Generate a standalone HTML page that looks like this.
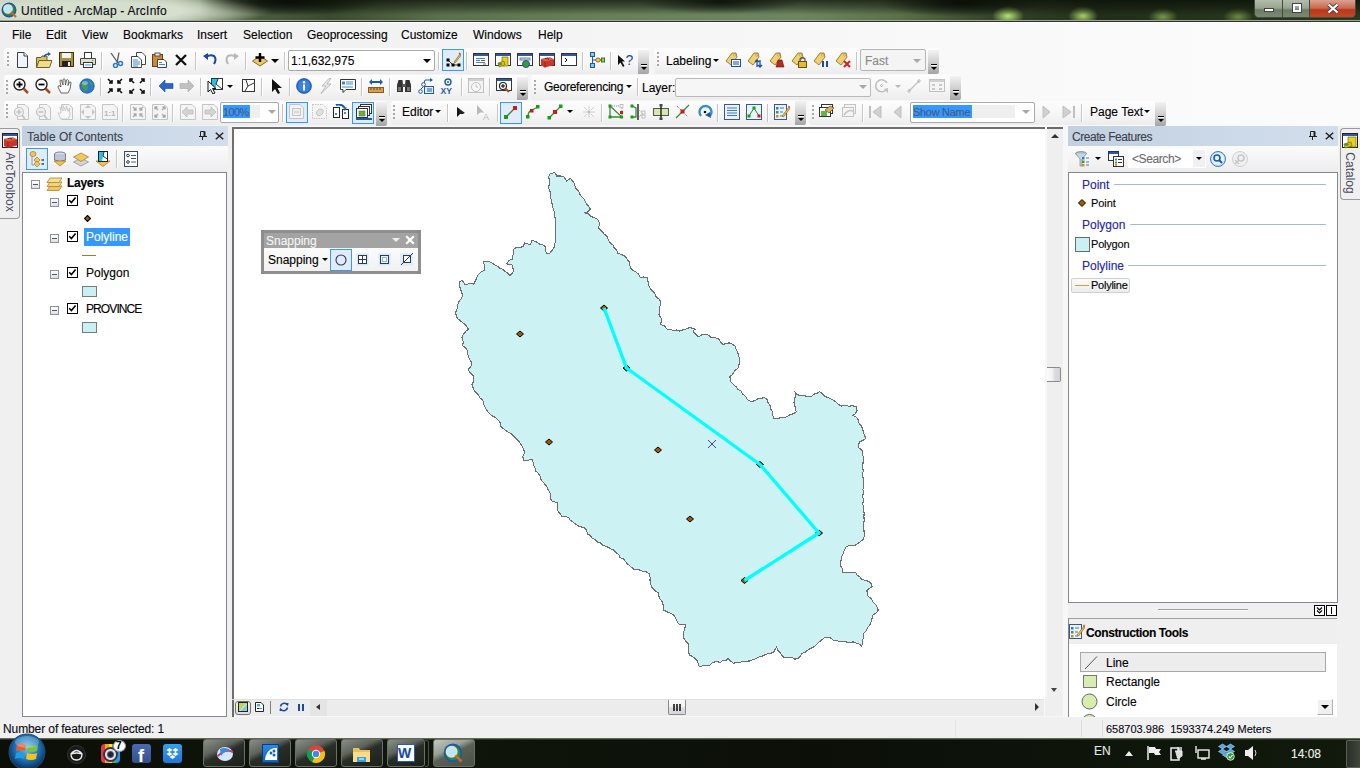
<!DOCTYPE html>
<html><head><meta charset="utf-8">
<style>
*{box-sizing:border-box;margin:0;padding:0}
html,body{width:1360px;height:768px;overflow:hidden;background:#f0f0f0;font-family:"Liberation Sans",sans-serif;font-size:12px;color:#000}
.a{position:absolute}
.t{position:absolute;white-space:nowrap;line-height:14px;height:14px;-webkit-text-stroke:0.12px currentColor}
.tb{position:absolute;background:linear-gradient(#fdfdfd,#f6f6f6 55%,#ececec);border-radius:3px}
.grip{position:absolute;width:2px;height:14px;background:repeating-linear-gradient(#a8a8a8 0 2px,transparent 2px 4px)}
.sep{position:absolute;width:1px;height:18px;background:#c5c5c5;border-right:1px solid #fff;width:2px}
.end{position:absolute;width:11px;background:linear-gradient(180deg,#f2f2f2,#d4d4d4 45%,#a4a4a4);border-radius:0 0 2px 0}
.end:after{content:"";position:absolute;left:3px;bottom:4px;width:0;height:0;border-left:3.5px solid transparent;border-right:3.5px solid transparent;border-top:3.5px solid #000}
.end:before{content:"";position:absolute;left:3px;bottom:9px;width:6px;height:1px;background:#000;box-shadow:0 1px 0 #fff}
.combo{position:absolute;background:#fff;border:1px solid #a9a9a9;border-radius:2px}
.dd{position:absolute;width:0;height:0;border-left:4px solid transparent;border-right:4px solid transparent;border-top:4px solid #000}
.hot{position:absolute;background:#e1ecf9;border:1px solid #3399ff}
.ico{position:absolute}
</style></head><body>
<div class="a" style="left:0;top:0;width:1360px;height:21px;background:
radial-gradient(ellipse 16px 10px at 1008px 16px,rgba(190,235,120,.95),rgba(190,235,120,0)),
radial-gradient(ellipse 15px 10px at 1083px 16px,rgba(190,235,120,.85),rgba(190,235,120,0)),
radial-gradient(ellipse 15px 9px at 1163px 17px,rgba(170,220,110,.6),rgba(170,220,110,0)),
radial-gradient(ellipse 15px 9px at 1238px 17px,rgba(170,220,110,.5),rgba(170,220,110,0)),
radial-gradient(ellipse 180px 17px at 92px 11px,rgba(214,222,206,1) 50%,rgba(200,210,190,0)),
radial-gradient(ellipse 90px 14px at 290px 2px,rgba(8,12,6,.9),rgba(8,12,6,0)),radial-gradient(ellipse 80px 12px at 720px 2px,rgba(8,12,6,.8),rgba(8,12,6,0)),radial-gradient(ellipse 80px 14px at 960px 3px,rgba(8,12,6,.9),rgba(8,12,6,0)),linear-gradient(90deg,#c8d0c0 0,#b8c2ae 170px,#7a8a6a 210px,#4a5c3e 260px,#3a4a2e 330px,#5a704c 440px,#68805a 600px,#6e8660 800px,#5a7048 900px,#34442a 990px,#222e1a 1100px,#2a3a20 1360px)"></div>
<div class="a" style="left:200px;top:0;width:1160px;height:21px;background:linear-gradient(180deg,rgba(8,12,6,.7) 0,rgba(8,12,6,.4) 35%,rgba(8,12,6,0) 70%);-webkit-mask-image:linear-gradient(90deg,transparent 0,#000 60px)"></div>
<div class="a" style="left:0;top:20px;width:1360px;height:1px;background:#9aa890"></div>
<div class="a" style="left:0;top:21px;width:1360px;height:1px;background:#2c3328"></div>
<div class="a" style="left:0;top:22px;width:1360px;height:1px;background:#fff"></div>
<svg class="a" style="left:1px;top:2px" width="17" height="17" viewBox="0 0 17 17">
<circle cx="8" cy="8" r="7.5" fill="#1d5aa0"/><circle cx="8" cy="8" r="6" fill="#2e8a3c"/><circle cx="7" cy="7" r="4.2" fill="#bfe6f5" stroke="#e0e0e0" stroke-width="1.3"/><line x1="10" y1="10" x2="15" y2="15" stroke="#c86a28" stroke-width="2.2"/></svg>
<div class="t" style="left:21px;top:4px;font-size:12px;color:#0b0b14;letter-spacing:0.22px">Untitled - ArcMap - ArcInfo</div>
<div class="a" style="left:1254px;top:0;width:102px;height:18px;border:1px solid #3e4a3a;border-top:none;border-radius:0 0 5px 5px;overflow:hidden;background:#6f7d68">
<div class="a" style="left:0;top:0;width:27px;height:18px;background:linear-gradient(#b4bcac,#98a490 45%,#6e7c66 55%,#7d8a74)"></div>
<div class="a" style="left:27px;top:0;width:1px;height:18px;background:#3e4a3a"></div>
<div class="a" style="left:28px;top:0;width:26px;height:18px;background:linear-gradient(#b4bcac,#98a490 45%,#6e7c66 55%,#7d8a74)"></div>
<div class="a" style="left:54px;top:0;width:1px;height:18px;background:#3e4a3a"></div>
<div class="a" style="left:55px;top:0;width:47px;height:18px;background:linear-gradient(#dca090,#c86a50 45%,#b83818 55%,#c84a28)"></div>
<div class="a" style="left:9px;top:8px;width:10px;height:4px;background:#fff;border:1px solid #444"></div>
<div class="a" style="left:38px;top:4px;width:8px;height:8px;border:2px solid #fff;box-shadow:0 0 0 1px #444"></div>
<svg class="a" style="left:72px;top:3px" width="12" height="11"><path d="M1.5 1.5 L10.5 9.5 M10.5 1.5 L1.5 9.5" stroke="#444" stroke-width="4"/><path d="M1.5 1.5 L10.5 9.5 M10.5 1.5 L1.5 9.5" stroke="#fff" stroke-width="2.2"/></svg>
</div>
<div class="a" style="left:0;top:23px;width:1360px;height:103px;background:linear-gradient(90deg,#efefef,#f4f4f4 40%,#f9f9f9 70%,#fbfbfb)"></div>
<div class="t" style="left:12px;top:28px;color:#000">File</div>
<div class="t" style="left:46px;top:28px;color:#000">Edit</div>
<div class="t" style="left:82px;top:28px;color:#000">View</div>
<div class="t" style="left:123px;top:28px;color:#000">Bookmarks</div>
<div class="t" style="left:197px;top:28px;color:#000">Insert</div>
<div class="t" style="left:243px;top:28px;color:#000">Selection</div>
<div class="t" style="left:307px;top:28px;color:#000">Geoprocessing</div>
<div class="t" style="left:401px;top:28px;color:#000">Customize</div>
<div class="t" style="left:473px;top:28px;color:#000">Windows</div>
<div class="t" style="left:538px;top:28px;color:#000">Help</div>
<div class="tb" style="left:4px;top:48px;width:645px;height:26px"></div>
<div class="grip" style="left:7px;top:52px"></div>
<div class="sep" style="left:101px;top:52px;height:18px"></div>
<div class="sep" style="left:195px;top:52px;height:18px"></div>
<div class="sep" style="left:245px;top:52px;height:18px"></div>
<div class="sep" style="left:284px;top:52px;height:18px"></div>
<div class="sep" style="left:438px;top:52px;height:18px"></div>
<div class="sep" style="left:466px;top:52px;height:18px"></div>
<div class="sep" style="left:582px;top:52px;height:18px"></div>
<div class="sep" style="left:610px;top:52px;height:18px"></div>
<div class="end" style="left:638px;top:50px;height:24px"></div>
<div class="combo" style="left:288px;top:50px;width:147px;height:21px"></div>
<div class="t" style="left:291px;top:54px;">1:1,632,975</div>
<div class="dd" style="left:423px;top:59px;border-left-width:4px;border-right-width:4px;border-top:4px solid #000"></div>
<div class="dd" style="left:271px;top:59px;border-left-width:4px;border-right-width:4px;border-top:4px solid #000"></div>
<div class="hot" style="left:442px;top:49px;width:22px;height:22px"></div>
<div class="tb" style="left:654px;top:48px;width:284px;height:26px"></div>
<div class="grip" style="left:657px;top:52px"></div>
<div class="t" style="left:666px;top:54px;">Labeling</div>
<div class="dd" style="left:713px;top:59px;border-left-width:3px;border-right-width:3px;border-top:3px solid #000"></div>
<div class="sep" style="left:856px;top:52px;height:18px"></div>
<div class="combo" style="left:860px;top:49px;width:66px;height:22px;background:#f4f4f4;border-color:#b5b5b5"></div>
<div class="t" style="left:865px;top:54px;color:#8a8a8a">Fast</div>
<div class="dd" style="left:913px;top:59px;border-left-width:4px;border-right-width:4px;border-top:4px solid #a8a8a8"></div>
<div class="end" style="left:928px;top:50px;height:24px"></div>
<div class="tb" style="left:4px;top:75px;width:524px;height:25px"></div>
<div class="grip" style="left:6px;top:80px"></div>
<div class="sep" style="left:100px;top:78px;height:18px"></div>
<div class="sep" style="left:150px;top:78px;height:18px"></div>
<div class="sep" style="left:200px;top:78px;height:18px"></div>
<div class="sep" style="left:261px;top:78px;height:18px"></div>
<div class="sep" style="left:289px;top:78px;height:18px"></div>
<div class="sep" style="left:361px;top:78px;height:18px"></div>
<div class="sep" style="left:389px;top:78px;height:18px"></div>
<div class="sep" style="left:461px;top:78px;height:18px"></div>
<div class="sep" style="left:489px;top:78px;height:18px"></div>
<div class="end" style="left:517px;top:77px;height:23px"></div>
<div class="dd" style="left:227px;top:85px;border-left-width:3px;border-right-width:3px;border-top:3px solid #000"></div>
<div class="tb" style="left:531px;top:75px;width:430px;height:25px"></div>
<div class="grip" style="left:534px;top:80px"></div>
<div class="t" style="left:544px;top:80px;letter-spacing:-0.25px">Georeferencing</div>
<div class="dd" style="left:626px;top:85px;border-left-width:3px;border-right-width:3px;border-top:3px solid #000"></div>
<div class="sep" style="left:637px;top:78px;height:18px"></div>
<div class="t" style="left:642px;top:81px;">Layer:</div>
<div class="combo" style="left:675px;top:78px;width:196px;height:19px;background:#f6f6f6;border-color:#b9b9b9"></div>
<div class="dd" style="left:859px;top:85px;border-left-width:4px;border-right-width:4px;border-top:4px solid #a8a8a8"></div>
<div class="dd" style="left:895px;top:85px;border-left-width:3px;border-right-width:3px;border-top:3px solid #b8b8b8"></div>
<div class="end" style="left:950px;top:76px;height:24px"></div>
<div class="tb" style="left:4px;top:101px;width:383px;height:24px"></div>
<div class="grip" style="left:6px;top:104px"></div>
<div class="sep" style="left:122px;top:104px;height:18px"></div>
<div class="sep" style="left:172px;top:104px;height:18px"></div>
<div class="sep" style="left:282px;top:104px;height:18px"></div>
<div class="combo" style="left:220px;top:102px;width:59px;height:21px"></div>
<div class="a" style="left:223px;top:105px;width:27px;height:13px;background:#3399ff"></div>
<div class="a" style="left:250px;top:105px;width:10px;height:13px;background:#efefef"></div>
<div class="t" style="left:223px;top:105px;color:#4a5a78;font-size:11px;letter-spacing:-0.6px">100%</div>
<div class="dd" style="left:268px;top:110px;border-left-width:4px;border-right-width:4px;border-top:4px solid #a8a8a8"></div>
<div class="hot" style="left:286px;top:102px;width:22px;height:21px"></div>
<div class="hot" style="left:352px;top:102px;width:22px;height:22px"></div>
<div class="end" style="left:376px;top:102px;height:24px"></div>
<div class="tb" style="left:391px;top:101px;width:415px;height:24px"></div>
<div class="grip" style="left:393px;top:105px"></div>
<div class="t" style="left:402px;top:105px;">Editor</div>
<div class="dd" style="left:435px;top:110px;border-left-width:3px;border-right-width:3px;border-top:3px solid #000"></div>
<div class="sep" style="left:447px;top:104px;height:18px"></div>
<div class="sep" style="left:497px;top:104px;height:18px"></div>
<div class="sep" style="left:601px;top:104px;height:18px"></div>
<div class="sep" style="left:717px;top:104px;height:18px"></div>
<div class="sep" style="left:767px;top:104px;height:18px"></div>
<div class="hot" style="left:500px;top:102px;width:22px;height:22px"></div>
<div class="dd" style="left:567px;top:110px;border-left-width:3px;border-right-width:3px;border-top:3px solid #000"></div>
<div class="end" style="left:795px;top:101px;height:24px"></div>
<div class="tb" style="left:809px;top:101px;width:357px;height:24px"></div>
<div class="grip" style="left:812px;top:105px"></div>
<div class="sep" style="left:862px;top:104px;height:18px"></div>
<div class="sep" style="left:1081px;top:104px;height:18px"></div>
<div class="combo" style="left:910px;top:102px;width:125px;height:21px"></div>
<div class="a" style="left:913px;top:105px;width:59px;height:13px;background:#3399ff"></div>
<div class="a" style="left:972px;top:105px;width:43px;height:13px;background:#efefef"></div>
<div class="t" style="left:913px;top:105px;color:#4a5a78;font-size:11px;letter-spacing:-0.3px">Show Name</div>
<div class="dd" style="left:1022px;top:110px;border-left-width:4px;border-right-width:4px;border-top:4px solid #a8a8a8"></div>
<div class="t" style="left:1090px;top:105px;">Page Text</div>
<div class="dd" style="left:1144px;top:110px;border-left-width:3px;border-right-width:3px;border-top:3px solid #000"></div>
<div class="end" style="left:1155px;top:102px;height:24px"></div>
<svg class="ico" style="left:14px;top:52px" width="16" height="16" viewBox="0 0 16 16"><path d="M3.5 0.5 H10 L13.5 4 V15.5 H3.5Z" fill="#eef5fc" stroke="#3c3c3c"/><path d="M10 0.5 V4 H13.5" fill="#fff" stroke="#3c3c3c"/></svg>
<svg class="ico" style="left:36px;top:52px" width="16" height="16" viewBox="0 0 16 16"><path d="M0.5 5.5 H5 L6 4 H11 V15.5 H0.5Z" fill="#d8c070" stroke="#6e5e20"/><path d="M0.5 15.5 L3 8.5 H16 L13.5 15.5Z" fill="#f0dc8a" stroke="#6e5e20"/><path d="M8 5 Q9 2 13 2" stroke="#1a5aa8" stroke-width="1.6" fill="none"/><path d="M12 0 L15 2 L12 4Z" fill="#1a5aa8"/></svg>
<svg class="ico" style="left:59px;top:52px" width="16" height="16" viewBox="0 0 16 16"><rect x="0.5" y="0.5" width="14" height="14" fill="#a89040" stroke="#3c3410"/><rect x="3" y="1" width="9" height="5" fill="#f4f4f4"/><rect x="3" y="9" width="9" height="5.5" fill="#222"/><rect x="9" y="10" width="2" height="4" fill="#eee"/></svg>
<svg class="ico" style="left:80px;top:52px" width="16" height="16" viewBox="0 0 16 16"><rect x="4.5" y="0.5" width="7" height="6" fill="#fff" stroke="#333"/><path d="M0.5 6.5 H15.5 V12.5 H0.5Z" fill="#e0e0c8" stroke="#444"/><rect x="3.5" y="10.5" width="9" height="5" fill="#fff" stroke="#333"/><path d="M5 13 H11" stroke="#3a8ad8"/><rect x="12" y="8" width="1.5" height="1" fill="#3c3"/></svg>
<svg class="ico" style="left:108px;top:52px" width="16" height="16" viewBox="0 0 16 16"><path d="M3 1 L10 11 M11 0.5 L9 11" stroke="#555" stroke-width="1.3" fill="none"/><circle cx="7.5" cy="13.5" r="2" fill="none" stroke="#2a7ac8" stroke-width="1.5"/><circle cx="12.5" cy="11.5" r="2" fill="none" stroke="#2a7ac8" stroke-width="1.5"/></svg>
<svg class="ico" style="left:131px;top:52px" width="16" height="16" viewBox="0 0 16 16"><path d="M5.5 0.5 H11 L14.5 4 V12.5 H5.5Z" fill="#fff" stroke="#444"/><path d="M0.5 4.5 H7 L10.5 8 V15.5 H0.5Z" fill="#fff" stroke="#444"/><path d="M2 8 H7 M2 10 H9 M2 12 H9 M2 14 H7" stroke="#3a8ad8"/></svg>
<svg class="ico" style="left:152px;top:52px" width="16" height="16" viewBox="0 0 16 16"><rect x="0.5" y="2.5" width="10" height="12" fill="#d08a30" stroke="#6a4010"/><rect x="3" y="1" width="5" height="3" fill="#eee" stroke="#555"/><path d="M5.5 7.5 H12 L14.5 10 V15.5 H5.5Z" fill="#fff" stroke="#444"/><path d="M7 10.5 H10 M7 12.5 H13" stroke="#3a8ad8"/></svg>
<svg class="ico" style="left:174px;top:52px" width="16" height="16" viewBox="0 0 16 16"><path d="M2 3 L12 13 M12 3 L2 13" stroke="#111" stroke-width="2.3"/></svg>
<svg class="ico" style="left:202px;top:52px" width="16" height="16" viewBox="0 0 16 16"><path d="M4 5 Q8 2 12 4 Q15 7 12 12" stroke="#1a4a98" stroke-width="2" fill="none"/><path d="M1 4 L6 1 L6 8Z" fill="#1a4a98"/></svg>
<svg class="ico" style="left:224px;top:52px" width="16" height="16" viewBox="0 0 16 16"><path d="M12 5 Q8 2 4 4 Q1 7 4 12" stroke="#b8b8b8" stroke-width="2" fill="none"/><path d="M15 4 L10 1 L10 8Z" fill="#b8b8b8"/></svg>
<svg class="ico" style="left:252px;top:52px" width="16" height="16" viewBox="0 0 16 16"><path d="M8 4 L15.5 9 L8 14 L0.5 9Z" fill="#f0c860" stroke="#8a6a20"/><path d="M8 1 V10 M3.5 5.5 H12.5" stroke="#000" stroke-width="2.4"/></svg>
<svg class="ico" style="left:445px;top:52px" width="16" height="16" viewBox="0 0 16 16"><path d="M3 8 L8 13 H14" stroke="#333" fill="none"/><rect x="1.5" y="6.5" width="3" height="3" fill="#000"/><rect x="1.5" y="11.5" width="3" height="3" fill="#000"/><rect x="6.5" y="11.5" width="3" height="3" fill="#000"/><rect x="12.5" y="11.5" width="3" height="3" fill="#000"/><path d="M9 10 L15 2 L16 3.5 L10 11Z" fill="#f0b830" stroke="#8a5a10" stroke-width=".6"/><path d="M14 1 L16 3" stroke="#e05050" stroke-width="1.6"/></svg>
<svg class="ico" style="left:473px;top:52px" width="16" height="16" viewBox="0 0 16 16"><rect x="0.5" y="1.5" width="15" height="12" fill="#fff" stroke="#333"/><rect x="1" y="2" width="14" height="2" fill="#2a5ab0"/><path d="M3 6.5 H12 M3 8.5 H7 M3 10.5 H12" stroke="#3a8ad8"/><path d="M8 8.5 H12" stroke="#d03030"/><path d="M10 12 H13" stroke="#3a3"/></svg>
<svg class="ico" style="left:495px;top:52px" width="16" height="16" viewBox="0 0 16 16"><rect x="0.5" y="1.5" width="15" height="12" fill="#fff" stroke="#333"/><rect x="1" y="2" width="14" height="2" fill="#2a5ab0"/><path d="M7 5 L13 5 L13 14 L7 14Z" fill="#e8d020" stroke="#7a6a10" stroke-width=".7"/><path d="M3 11 L9 9 L10 13 L4 15Z" fill="#d8c010" stroke="#7a6a10" stroke-width=".7"/><ellipse cx="5" cy="12" rx="2" ry="1.2" fill="#3a9a3a"/></svg>
<svg class="ico" style="left:517px;top:52px" width="16" height="16" viewBox="0 0 16 16"><rect x="0.5" y="1.5" width="15" height="12" fill="#fff" stroke="#333"/><rect x="1" y="2" width="14" height="2" fill="#2a5ab0"/><rect x="3" y="6" width="10" height="2" fill="#c8d8e8" stroke="#789"/><circle cx="9" cy="12" r="3.5" fill="#3a9a3a" stroke="#1a5aa8"/></svg>
<svg class="ico" style="left:539px;top:52px" width="16" height="16" viewBox="0 0 16 16"><rect x="0.5" y="1.5" width="15" height="12" fill="#fff" stroke="#333"/><rect x="1" y="2" width="14" height="2" fill="#2a5ab0"/><path d="M2 7 L11 5.5 L15 7.5 L15 13 L6 15.5 L2 13.5Z" fill="#c8382a"/><path d="M2 7 L11 5.5 L15 7.5 L6 9.5Z" fill="#e05848"/><path d="M6 9.5 V15.5" stroke="#8a1a10" stroke-width=".7"/><path d="M6 6.5 L9 6 L9.5 7.5" stroke="#333" fill="none" stroke-width=".9"/></svg>
<svg class="ico" style="left:561px;top:52px" width="16" height="16" viewBox="0 0 16 16"><rect x="0.5" y="1.5" width="15" height="12" fill="#fff" stroke="#333"/><rect x="1" y="2" width="14" height="2" fill="#2a5ab0"/><path d="M4 6 L6 8 L4 10" stroke="#000" fill="none"/></svg>
<svg class="ico" style="left:589px;top:52px" width="16" height="16" viewBox="0 0 16 16"><rect x="1.5" y="0.5" width="4" height="4" fill="#8ac8f0" stroke="#1a5aa8"/><rect x="1.5" y="11.5" width="4" height="4" fill="#8ac8f0" stroke="#1a5aa8"/><path d="M3.5 4.5 V11.5 M3.5 8 H13" stroke="#1a5aa8"/><ellipse cx="9" cy="8" rx="2.3" ry="2" fill="#f0d060" stroke="#8a6a10"/><rect x="12.5" y="6" width="3" height="4" fill="#8ad060" stroke="#3a7a20"/></svg>
<svg class="ico" style="left:617px;top:52px" width="16" height="16" viewBox="0 0 16 16"><path d="M1 3 L1 13 L3.5 10.5 L6 15 L7.5 14 L5 9.5 L8 9.5Z" fill="#111"/><text x="8.5" y="13" font-family="Liberation Sans" font-size="14" fill="#1a4aa8">?</text></svg>
<svg class="ico" style="left:725px;top:52px" width="16" height="16" viewBox="0 0 16 16"><path d="M1 9 L7 1 L11 1 L12 5 L6 13Z" fill="#f0d070" stroke="#8a6a10" stroke-width=".8"/><circle cx="9.5" cy="3" r="1" fill="#fff" stroke="#8a6a10" stroke-width=".5"/><rect x="6.5" y="7.5" width="9" height="7" fill="#fff" stroke="#1a4aa8"/><path d="M8 10 H14 M8 12 H14" stroke="#1a4aa8"/></svg>
<svg class="ico" style="left:747px;top:52px" width="16" height="16" viewBox="0 0 16 16"><path d="M1 9 L7 1 L11 1 L12 5 L6 13Z" fill="#f0d070" stroke="#8a6a10" stroke-width=".8"/><circle cx="9.5" cy="3" r="1" fill="#fff" stroke="#8a6a10" stroke-width=".5"/><path d="M10 15 V8 M8 10 L10 8 L12 10 M13 8 V15 M11 13 L13 15 L15 13" stroke="#1a4aa8" stroke-width="1.3" fill="none"/></svg>
<svg class="ico" style="left:769px;top:52px" width="16" height="16" viewBox="0 0 16 16"><path d="M1 9 L7 1 L11 1 L12 5 L6 13Z" fill="#f0d070" stroke="#8a6a10" stroke-width=".8"/><circle cx="9.5" cy="3" r="1" fill="#fff" stroke="#8a6a10" stroke-width=".5"/><path d="M7 15 L9 8 H13 L15 15Z" fill="#b82a20" stroke="#5a1010" stroke-width=".6"/></svg>
<svg class="ico" style="left:791px;top:52px" width="16" height="16" viewBox="0 0 16 16"><path d="M1 9 L7 1 L11 1 L12 5 L6 13Z" fill="#f0d070" stroke="#8a6a10" stroke-width=".8"/><circle cx="9.5" cy="3" r="1" fill="#fff" stroke="#8a6a10" stroke-width=".5"/><rect x="7.5" y="9.5" width="8" height="6" fill="#e8b830" stroke="#6a5010"/><path d="M9 9.5 V7 Q11.5 4.5 14 7 V9.5" stroke="#555" fill="none" stroke-width="1.2"/></svg>
<svg class="ico" style="left:813px;top:52px" width="16" height="16" viewBox="0 0 16 16"><path d="M1 9 L7 1 L11 1 L12 5 L6 13Z" fill="#f0d070" stroke="#8a6a10" stroke-width=".8"/><circle cx="9.5" cy="3" r="1" fill="#fff" stroke="#8a6a10" stroke-width=".5"/><rect x="9" y="9" width="2" height="6" fill="#1a4aa8"/><rect x="13" y="9" width="2" height="6" fill="#1a4aa8"/></svg>
<svg class="ico" style="left:835px;top:52px" width="16" height="16" viewBox="0 0 16 16"><path d="M1 9 L7 1 L11 1 L12 5 L6 13Z" fill="#f0d070" stroke="#8a6a10" stroke-width=".8"/><circle cx="9.5" cy="3" r="1" fill="#fff" stroke="#8a6a10" stroke-width=".5"/><path d="M9 9 L15 15 M15 9 L9 15" stroke="#d82020" stroke-width="2"/></svg>
<svg class="ico" style="left:13px;top:78px" width="16" height="16" viewBox="0 0 16 16"><circle cx="6.5" cy="6.5" r="5.5" fill="#fff" stroke="#222" stroke-width="1.4"/><path d="M3.5 6.5 H9.5 M6.5 3.5 V9.5" stroke="#000" stroke-width="1.8"/><path d="M10.5 10.5 L15 15" stroke="#a05020" stroke-width="2.5"/></svg>
<svg class="ico" style="left:35px;top:78px" width="16" height="16" viewBox="0 0 16 16"><circle cx="6.5" cy="6.5" r="5.5" fill="#fff" stroke="#222" stroke-width="1.4"/><path d="M3.5 6.5 H9.5" stroke="#000" stroke-width="1.8"/><path d="M10.5 10.5 L15 15" stroke="#a05020" stroke-width="2.5"/></svg>
<svg class="ico" style="left:57px;top:78px" width="16" height="16" viewBox="0 0 16 16"><path d="M4 15 L1 9 Q1 7 3 8 L4 9 L3 3 Q3 1.5 4.5 2 L6 7 L6 1.5 Q7 0 8 1.5 L8.5 7 L9.5 2 Q10.5 1 11.5 2.5 L11 7.5 L12.5 4 Q14 3.5 14 5 L13 11 L11 15Z" fill="#fff" stroke="#555" stroke-width=".9"/></svg>
<svg class="ico" style="left:79px;top:78px" width="16" height="16" viewBox="0 0 16 16"><circle cx="8" cy="8" r="7.3" fill="#2a7ad0" stroke="#1a4a80" stroke-width=".6"/><path d="M3 5 Q6 3 8 5 Q7 8 9 9 Q8 13 6 13 Q4 10 3 9Z M10 3 Q13 4 14 7 Q12 8 11 6Z" fill="#4aa040"/><ellipse cx="6" cy="5" rx="3" ry="2" fill="#fff" opacity=".35"/></svg>
<svg class="ico" style="left:107px;top:78px" width="16" height="16" viewBox="0 0 16 16"><path d="M1 1 L5 5 M5 2 V5 H2 M15 1 L11 5 M11 2 V5 H14 M1 15 L5 11 M2 11 H5 V14 M15 15 L11 11 M14 11 H11 V14" stroke="#111" stroke-width="1.6" fill="none"/></svg>
<svg class="ico" style="left:129px;top:78px" width="16" height="16" viewBox="0 0 16 16"><path d="M5 5 L1 1 M1 4 V1 H4 M11 5 L15 1 M12 1 H15 V4 M5 11 L1 15 M1 12 V15 H4 M11 11 L15 15 M15 12 V15 H12" stroke="#111" stroke-width="1.6" fill="none"/></svg>
<svg class="ico" style="left:158px;top:78px" width="16" height="16" viewBox="0 0 16 16"><path d="M1 8 L7 2 V5.5 H15 V10.5 H7 V14Z" fill="#2a66c8" stroke="#1a4a98" stroke-width=".6"/></svg>
<svg class="ico" style="left:179px;top:78px" width="16" height="16" viewBox="0 0 16 16"><path d="M15 8 L9 2 V5.5 H1 V10.5 H9 V14Z" fill="#c0c0c0" stroke="#aaa" stroke-width=".6"/></svg>
<svg class="ico" style="left:207px;top:78px" width="16" height="16" viewBox="0 0 16 16"><rect x="4.5" y="0.5" width="11" height="11" fill="#fff" stroke="#333"/><path d="M5 1 H11 L8 11 H5Z" fill="#2ac0e8"/><path d="M11 1 L9 6 L15 11" stroke="#333" fill="none"/><path d="M1 3 L1 14 L3.5 11.5 L6 16 L8 15 L5.5 10.5 L9 10.5Z" fill="#fff" stroke="#111"/></svg>
<svg class="ico" style="left:241px;top:78px" width="16" height="16" viewBox="0 0 16 16"><rect x="1.5" y="1.5" width="12" height="12" fill="#fff" stroke="#333"/><path d="M5 2 L7 8 L4 13 M7 8 L13 5" stroke="#333" fill="none"/></svg>
<svg class="ico" style="left:270px;top:78px" width="16" height="16" viewBox="0 0 16 16"><path d="M2 1 L2 14 L5 11 L8 16 L10 15 L7.5 10 L12 10Z" fill="#111"/></svg>
<svg class="ico" style="left:296px;top:78px" width="16" height="16" viewBox="0 0 16 16"><circle cx="8" cy="8" r="7.5" fill="#2a6ad0" stroke="#1a3a90" stroke-width=".6"/><circle cx="8" cy="8" r="6" fill="#3a82e0"/><rect x="7" y="6.5" width="2" height="6" fill="#fff"/><circle cx="8" cy="4.2" r="1.2" fill="#fff"/></svg>
<svg class="ico" style="left:318px;top:78px" width="16" height="16" viewBox="0 0 16 16"><path d="M11 0.5 L4 8 H8 L3 15.5 L13 6 H9 L13 0.5Z" fill="#e8e8e8" stroke="#b0b0b0" stroke-width=".8"/></svg>
<svg class="ico" style="left:340px;top:78px" width="16" height="16" viewBox="0 0 16 16"><path d="M0.5 1.5 H15.5 V11.5 H6 L3 14.5 V11.5 H0.5Z" fill="#fff" stroke="#333"/><rect x="2" y="3.5" width="3" height="3" fill="#3a8ad8"/><path d="M6 4 H13 M6 6 H13 M2 9 H13" stroke="#3a8ad8"/></svg>
<svg class="ico" style="left:368px;top:78px" width="16" height="16" viewBox="0 0 16 16"><path d="M1 4 L4 1 V3 H12 V1 L15 4 L12 7 V5 H4 V7Z" fill="#1a5ab0"/><rect x="0.5" y="9.5" width="15" height="5" fill="#d8a050" stroke="#8a5a20"/><path d="M3 10 V12 M6 10 V12 M9 10 V12 M12 10 V12" stroke="#6a4010"/></svg>
<svg class="ico" style="left:396px;top:78px" width="16" height="16" viewBox="0 0 16 16"><path d="M1 7 L2.5 2 H6.5 L7 7 V14 H1Z" fill="#333"/><path d="M9 7 L9.5 2 H13.5 L15 7 V14 H9Z" fill="#333"/><rect x="6" y="6" width="4" height="3" fill="#555"/><rect x="2" y="9" width="3" height="4" fill="#777"/><rect x="11" y="9" width="3" height="4" fill="#777"/></svg>
<svg class="ico" style="left:418px;top:78px" width="16" height="16" viewBox="0 0 16 16"><circle cx="2.5" cy="13.5" r="1.8" fill="#fff" stroke="#1a5aa8"/><circle cx="5.5" cy="6.5" r="1.8" fill="#fff" stroke="#1a5aa8"/><path d="M2.5 11.5 L5.5 8.5 M6 5 L7 2 H13" stroke="#1a5aa8" fill="none"/><path d="M12 0 L15 2 L12 4Z" fill="#1a5aa8"/><rect x="6.5" y="8.5" width="9" height="7" fill="#e8f0fa" stroke="#1a5aa8"/><path d="M9 11 H14 M9 13 H14" stroke="#1a5aa8"/></svg>
<svg class="ico" style="left:440px;top:78px" width="16" height="16" viewBox="0 0 16 16"><circle cx="8" cy="4" r="3" fill="none" stroke="#1a5aa8" stroke-width="1.4"/><circle cx="8" cy="4" r="1" fill="#1a5aa8"/><text x="0.5" y="15.5" font-family="Liberation Sans" font-weight="bold" font-size="8.5" fill="#1a5aa8">XY</text></svg>
<svg class="ico" style="left:468px;top:78px" width="16" height="16" viewBox="0 0 16 16"><rect x="0.5" y="0.5" width="15" height="14" fill="#f4f4f4" stroke="#c0c0c0"/><rect x="1" y="1" width="14" height="2" fill="#d0d0d0"/><circle cx="8" cy="9" r="4.5" fill="#f8f8f8" stroke="#c0c0c0"/><path d="M8 6.5 V9 H10" stroke="#c0c0c0" fill="none"/></svg>
<svg class="ico" style="left:496px;top:78px" width="16" height="16" viewBox="0 0 16 16"><rect x="0.5" y="0.5" width="15" height="12" fill="#fff" stroke="#333"/><rect x="1" y="1" width="14" height="2" fill="#2a5ab0"/><circle cx="7" cy="8" r="3.5" fill="#fff" stroke="#222" stroke-width="1.2"/><path d="M5 8 H9 M7 6 V10" stroke="#000"/><path d="M9.5 10.5 L13 14" stroke="#a05020" stroke-width="2"/></svg>
<svg class="ico" style="left:874px;top:78px" width="16" height="16" viewBox="0 0 16 16"><path d="M12 12 A6 6 0 1 1 13 5" stroke="#c0c0c0" stroke-width="1.6" fill="none"/><path d="M10 11 L14 15 L14 10Z" fill="#c0c0c0"/><circle cx="7.5" cy="7.5" r="1" fill="none" stroke="#b0b0b0"/></svg>
<svg class="ico" style="left:906px;top:78px" width="16" height="16" viewBox="0 0 16 16"><path d="M3 13 L13 3 M1 13 H5 M3 11 V15 M11 3 H15 M13 1 V5" stroke="#c0c0c0" stroke-width="1.2"/></svg>
<svg class="ico" style="left:929px;top:78px" width="16" height="16" viewBox="0 0 16 16"><rect x="0.5" y="1.5" width="15" height="12" fill="#f4f4f4" stroke="#c0c0c0"/><rect x="1" y="2" width="14" height="2" fill="#d0d0d0"/><rect x="3" y="6" width="3" height="2" fill="#c8c8c8"/><rect x="10" y="6" width="3" height="2" fill="#c8c8c8"/><rect x="3" y="10" width="3" height="2" fill="#c8c8c8"/><rect x="10" y="10" width="3" height="2" fill="#c8c8c8"/></svg>
<svg class="ico" style="left:13px;top:104px" width="16" height="16" viewBox="0 0 16 16"><path d="M4.5 0.5 H12 L15.5 4 V15.5 H4.5Z" fill="#f4f4f4" stroke="#c4c4c4"/><circle cx="6" cy="8" r="4.5" fill="#f0f0f0" stroke="#c4c4c4" stroke-width="1.2"/><path d="M3.5 8 H8.5 M6 5.5 V10.5" stroke="#c4c4c4" stroke-width="1.6"/><path d="M9 11 L12 15" stroke="#c4c4c4" stroke-width="2"/></svg>
<svg class="ico" style="left:35px;top:104px" width="16" height="16" viewBox="0 0 16 16"><path d="M4.5 0.5 H12 L15.5 4 V15.5 H4.5Z" fill="#f4f4f4" stroke="#c4c4c4"/><circle cx="6" cy="8" r="4.5" fill="#f0f0f0" stroke="#c4c4c4" stroke-width="1.2"/><path d="M3.5 8 H8.5" stroke="#c4c4c4" stroke-width="1.6"/><path d="M9 11 L12 15" stroke="#c4c4c4" stroke-width="2"/></svg>
<svg class="ico" style="left:57px;top:104px" width="16" height="16" viewBox="0 0 16 16"><path d="M4.5 0.5 H12 L15.5 4 V15.5 H4.5Z" fill="#f4f4f4" stroke="#c4c4c4"/><path d="M4 15 L1 9 L4 9 L3 3 L6 7 L6 1.5 L8.5 7 L9.5 2 L11 7.5 L12.5 4 L13 11 L11 15Z" fill="#f8f8f8" stroke="#c4c4c4" stroke-width=".9"/></svg>
<svg class="ico" style="left:80px;top:104px" width="16" height="16" viewBox="0 0 16 16"><path d="M0.5 0.5 H12 L15.5 4 V15.5 H0.5Z" fill="#f4f4f4" stroke="#c4c4c4"/><path d="M8 1 L11 4 H5Z M8 15 L11 12 H5Z M1 8 L4 5 V11Z M15 8 L12 5 V11Z" fill="#c4c4c4"/></svg>
<svg class="ico" style="left:102px;top:104px" width="16" height="16" viewBox="0 0 16 16"><path d="M0.5 0.5 H12 L15.5 4 V15.5 H0.5Z" fill="#f4f4f4" stroke="#c4c4c4"/><text x="2" y="12" font-family="Liberation Sans" font-weight="bold" font-size="8" fill="#b8b8b8">1:1</text></svg>
<svg class="ico" style="left:130px;top:104px" width="16" height="16" viewBox="0 0 16 16"><path d="M0.5 0.5 H12 L15.5 4 V15.5 H0.5Z" fill="#f4f4f4" stroke="#c4c4c4"/><path d="M3 3 L6 6 M6 3.5 V6 H3.5 M13 3 L10 6 M10 3.5 V6 H12.5 M3 13 L6 10 M3.5 10 H6 V12.5 M13 13 L10 10 M12.5 10 H10 V12.5" stroke="#a8a8a8" stroke-width="1.3" fill="none"/></svg>
<svg class="ico" style="left:152px;top:104px" width="16" height="16" viewBox="0 0 16 16"><path d="M0.5 0.5 H12 L15.5 4 V15.5 H0.5Z" fill="#f4f4f4" stroke="#c4c4c4"/><path d="M6 6 L3 3 M3 5.5 V3 H5.5 M10 6 L13 3 M10.5 3 H13 V5.5 M6 10 L3 13 M3 10.5 V13 H5.5 M10 10 L13 13 M13 10.5 V13 H10.5" stroke="#a8a8a8" stroke-width="1.3" fill="none"/></svg>
<svg class="ico" style="left:180px;top:104px" width="16" height="16" viewBox="0 0 16 16"><path d="M0.5 0.5 H12 L15.5 4 V15.5 H0.5Z" fill="#f4f4f4" stroke="#c4c4c4"/><path d="M2 8 L7 3 V6 H13 V10 H7 V13Z" fill="#d4d4d4" stroke="#b0b0b0" stroke-width=".6"/></svg>
<svg class="ico" style="left:202px;top:104px" width="16" height="16" viewBox="0 0 16 16"><path d="M0.5 0.5 H12 L15.5 4 V15.5 H0.5Z" fill="#f4f4f4" stroke="#c4c4c4"/><path d="M14 8 L9 3 V6 H3 V10 H9 V13Z" fill="#d4d4d4" stroke="#b0b0b0" stroke-width=".6"/></svg>
<svg class="ico" style="left:289px;top:104px" width="16" height="16" viewBox="0 0 16 16"><path d="M0.5 0.5 H11 L14.5 4 V14.5 H0.5Z" fill="#f4f4f4" stroke="#c4c4c4"/><rect x="3.5" y="4.5" width="8" height="7" fill="#eee" stroke="#c4c4c4"/><path d="M5 8 H10" stroke="#c4c4c4"/></svg>
<svg class="ico" style="left:312px;top:104px" width="16" height="16" viewBox="0 0 16 16"><path d="M0.5 0.5 H11 L14.5 4 V14.5 H0.5Z" fill="#f4f4f4" stroke="#c4c4c4" stroke-dasharray="1.5 1"/><path d="M4 9 Q7 3 11 6 Q12 11 6 12Z" fill="#e0e0e0" stroke="#c4c4c4"/></svg>
<svg class="ico" style="left:333px;top:104px" width="16" height="16" viewBox="0 0 16 16"><rect x="0.5" y="3.5" width="6" height="10" fill="#fff" stroke="#222"/><rect x="9.5" y="5.5" width="6" height="9" fill="#fff" stroke="#222"/><path d="M3 1 Q8 -1 12 4" stroke="#1a5aa8" stroke-width="2" fill="none"/><path d="M10 5 L14 3 L12 7Z" fill="#1a5aa8"/><rect x="2" y="9" width="2" height="2" fill="#3a8ad8"/><rect x="11" y="8" width="2" height="2" fill="#3a8ad8"/></svg>
<svg class="ico" style="left:356px;top:104px" width="16" height="16" viewBox="0 0 16 16"><rect x="4.5" y="0.5" width="11" height="9" fill="#fff" stroke="#333"/><rect x="2.5" y="2.5" width="11" height="9" fill="#fff" stroke="#333"/><rect x="0.5" y="4.5" width="11" height="9" fill="#fff" stroke="#333"/><rect x="3" y="7" width="6" height="5" fill="#6ab04a" stroke="#3a6a20" stroke-width=".5"/><rect x="0" y="14" width="16" height="2" fill="#1a5aa8"/></svg>
<svg class="ico" style="left:455px;top:104px" width="16" height="16" viewBox="0 0 16 16"><path d="M2 3 L2 13 L5 10 L9 10Z" fill="#111"/><path d="M2 3 L10 9 L5 10Z" fill="#222"/></svg>
<svg class="ico" style="left:475px;top:104px" width="16" height="16" viewBox="0 0 16 16"><path d="M2 1 L2 11 L5 8.5 L9 8.5Z" fill="#b8b8b8"/><text x="8" y="15.5" font-family="Liberation Sans" font-size="9" fill="#b8b8b8">A</text></svg>
<svg class="ico" style="left:503px;top:104px" width="16" height="16" viewBox="0 0 16 16"><path d="M3 13 L12 4" stroke="#3a8a3a" stroke-width="1.3"/><rect x="1" y="11" width="4" height="4" fill="#1a9a1a"/><rect x="10" y="2" width="4" height="4" fill="#d01a1a"/></svg>
<svg class="ico" style="left:525px;top:104px" width="16" height="16" viewBox="0 0 16 16"><path d="M3 13 Q3 7 7 6 L13 3" stroke="#3a8a3a" stroke-width="1.3" fill="none"/><rect x="1" y="11" width="3.5" height="3.5" fill="#1a9a1a"/><rect x="5" y="5" width="3.5" height="3.5" fill="#d01a1a"/><rect x="11" y="1" width="3.5" height="3.5" fill="#1a9a1a"/></svg>
<svg class="ico" style="left:547px;top:104px" width="16" height="16" viewBox="0 0 16 16"><path d="M2 14 L14 2" stroke="#3a8a3a" stroke-width="1.3"/><rect x="0.5" y="12" width="3.5" height="3.5" fill="#1a9a1a"/><rect x="6" y="6" width="4" height="4" fill="#d01a1a"/><rect x="12" y="0.5" width="3.5" height="3.5" fill="#1a9a1a"/></svg>
<svg class="ico" style="left:581px;top:104px" width="16" height="16" viewBox="0 0 16 16"><path d="M8 2 V6 M8 10 V14 M2 8 H6 M10 8 H14 M3 3 L6 6 M13 3 L10 6 M3 13 L6 10 M13 13 L10 10" stroke="#d0d0d0" stroke-width="1"/><rect x="6.5" y="6.5" width="3" height="3" fill="#c0c0c0"/></svg>
<svg class="ico" style="left:608px;top:104px" width="16" height="16" viewBox="0 0 16 16"><path d="M2 2 L14 13 H2Z" fill="none" stroke="#3a8a3a" stroke-width="1.3"/><path d="M2 2 H14 V13" stroke="#999" stroke-dasharray="1 1" fill="none"/><rect x="0.5" y="0.5" width="3" height="3" fill="#1a9a1a"/><rect x="0.5" y="11.5" width="3" height="3" fill="#1a9a1a"/><rect x="12" y="11.5" width="3" height="3" fill="#1a9a1a"/><rect x="12" y="7" width="3" height="3" fill="#d01a1a"/><rect x="12" y="0.5" width="3" height="3" fill="#fff" stroke="#999" stroke-width=".6"/></svg>
<svg class="ico" style="left:630px;top:104px" width="16" height="16" viewBox="0 0 16 16"><path d="M2 2 L6 4 V13 H2" fill="none" stroke="#3a8a3a" stroke-width="1.3"/><rect x="0.5" y="0.5" width="3" height="3" fill="#1a9a1a"/><rect x="0.5" y="11.5" width="3" height="3" fill="#1a9a1a"/><path d="M8 0 V16" stroke="#111" stroke-width="1.3"/><path d="M9 6 L13 9 L9 13" stroke="#999" stroke-dasharray="1 1" fill="none"/><rect x="12" y="7" width="3" height="3" fill="#fff" stroke="#999" stroke-width=".6"/><rect x="12" y="11" width="3" height="3" fill="#fff" stroke="#999" stroke-width=".6"/></svg>
<svg class="ico" style="left:653px;top:104px" width="16" height="16" viewBox="0 0 16 16"><rect x="0.5" y="4.5" width="15" height="7" fill="#d8e8a8" stroke="#555"/><path d="M8 1 V15" stroke="#111" stroke-width="1.3"/><rect x="6.5" y="0" width="3" height="2.5" fill="#444"/><rect x="6.5" y="13.5" width="3" height="2.5" fill="#444"/></svg>
<svg class="ico" style="left:675px;top:104px" width="16" height="16" viewBox="0 0 16 16"><path d="M1 14 L14 1" stroke="#3a8a3a" stroke-width="1.2"/><path d="M2 2 L13 13" stroke="#555" stroke-dasharray="1 1.2"/><rect x="5.5" y="5.5" width="4" height="4" fill="#d01a1a"/></svg>
<svg class="ico" style="left:697px;top:104px" width="16" height="16" viewBox="0 0 16 16"><path d="M4 12 A6 6 0 1 1 13 12" stroke="#3a8ad8" stroke-width="2.4" fill="none"/><path d="M8 11 L14 14 L13 8Z" fill="#1a5aa8"/><circle cx="8" cy="8" r="1.3" fill="#111"/></svg>
<svg class="ico" style="left:724px;top:104px" width="16" height="16" viewBox="0 0 16 16"><rect x="0.5" y="0.5" width="15" height="15" fill="#eaf2fb" stroke="#3a5a80"/><path d="M3 4 H13 M3 6.5 H13 M3 9 H13 M3 11.5 H13" stroke="#3a7ac8"/></svg>
<svg class="ico" style="left:746px;top:104px" width="16" height="16" viewBox="0 0 16 16"><rect x="0.5" y="0.5" width="15" height="15" fill="#eaf2fb" stroke="#3a5a80"/><path d="M3 12 L8 4 L13 12" stroke="#2a8a2a" fill="none"/><rect x="6.5" y="2.5" width="3" height="3" fill="#1a9a1a"/><rect x="1.5" y="10.5" width="3" height="3" fill="#1a9a1a"/><rect x="11.5" y="10.5" width="3" height="3" fill="#d01a1a"/></svg>
<svg class="ico" style="left:774px;top:104px" width="16" height="16" viewBox="0 0 16 16"><rect x="0.5" y="0.5" width="12" height="15" fill="#eaf2fb" stroke="#3a5a80"/><rect x="2" y="3" width="2.5" height="2.5" fill="#3a7ac8"/><rect x="2" y="7" width="2.5" height="2.5" fill="#4a9a2a"/><rect x="2" y="11" width="2.5" height="2.5" fill="#d88a20"/><path d="M6 4 H10 M6 8 H9 M6 12 H9" stroke="#3a7ac8"/><path d="M8 12 L15 3 L16 4.5 L9.5 13Z" fill="#f0c040" stroke="#8a5a10" stroke-width=".6"/><path d="M14.5 2 L16 4" stroke="#e05050" stroke-width="1.5"/></svg>
<svg class="ico" style="left:818px;top:104px" width="16" height="16" viewBox="0 0 16 16"><rect x="3.5" y="0.5" width="11" height="9" fill="#fff" stroke="#333"/><rect x="1.5" y="3.5" width="11" height="9" fill="#fff" stroke="#333"/><rect x="3" y="7" width="6" height="5" fill="#6ab04a"/><path d="M7 6 L12 2 L16 4 L11 9Z" fill="#d8b060" stroke="#6a4a10" stroke-width=".7"/></svg>
<svg class="ico" style="left:841px;top:104px" width="16" height="16" viewBox="0 0 16 16"><rect x="3.5" y="0.5" width="11" height="9" fill="#f4f4f4" stroke="#c4c4c4"/><rect x="1.5" y="3.5" width="11" height="9" fill="#f4f4f4" stroke="#c4c4c4"/><path d="M3 11 Q8 4 13 8" stroke="#c4c4c4" stroke-width="1.6" fill="none"/></svg>
<svg class="ico" style="left:868px;top:104px" width="16" height="16" viewBox="0 0 16 16"><path d="M2 2 V14" stroke="#c0c0c0" stroke-width="2"/><path d="M13 2 L5 8 L13 14Z" fill="#d0d0d0" stroke="#c0c0c0"/></svg>
<svg class="ico" style="left:890px;top:104px" width="16" height="16" viewBox="0 0 16 16"><path d="M11 2 L4 8 L11 14Z" fill="#d0d0d0" stroke="#c0c0c0"/></svg>
<svg class="ico" style="left:1038px;top:104px" width="16" height="16" viewBox="0 0 16 16"><path d="M5 2 L12 8 L5 14Z" fill="#d0d0d0" stroke="#c0c0c0"/></svg>
<svg class="ico" style="left:1060px;top:104px" width="16" height="16" viewBox="0 0 16 16"><path d="M14 2 V14" stroke="#c0c0c0" stroke-width="2"/><path d="M3 2 L11 8 L3 14Z" fill="#d0d0d0" stroke="#c0c0c0"/></svg>
<div class="a" style="left:0;top:128px;width:20px;height:91px;background:#f0f0f0;border:1px solid #9a9a9a;border-left:none;border-radius:0 4px 4px 0"></div>
<div class="t" style="left:-25px;top:175px;width:70px;text-align:center;transform:rotate(90deg);color:#4a4a5e;font-size:12px;-webkit-text-stroke:0">ArcToolbox</div>
<div class="a" style="left:22px;top:126px;width:206px;height:20px;background:linear-gradient(90deg,#c2d0e0,#ccd9e8 60%,#d2deec)"></div>
<div class="t" style="left:27px;top:130px;color:#3c4250">Table Of Contents</div>
<svg class="a" style="left:199px;top:131px" width="8" height="9"><path d="M1.5 0.5 H5.5 V5 M1.5 0.5 V5" stroke="#222" fill="none"/><rect x="4.5" y="0.5" width="2" height="4.5" fill="#222"/><path d="M0 5.5 H8" stroke="#222"/><path d="M3.5 5.5 V9" stroke="#222"/></svg>
<svg class="a" style="left:215px;top:132px" width="9" height="8"><path d="M0.8 0.8 L8.2 7.2 M8.2 0.8 L0.8 7.2" stroke="#222" stroke-width="1.5"/></svg>
<div class="a" style="left:22px;top:146px;width:206px;height:26px;background:linear-gradient(#fbfbfb,#f3f3f3 60%,#ececec)"></div>
<div class="hot" style="left:26px;top:148px;width:22px;height:22px"></div>
<div class="sep" style="left:116px;top:150px;height:18px"></div>
<svg class="ico" style="left:29px;top:151px" width="16" height="16" viewBox="0 0 16 16"><ellipse cx="4" cy="3" rx="3" ry="2.5" fill="#f0c860" stroke="#a07a20" stroke-width=".7"/><path d="M5 9 L8 6 L11 9 L8 12Z" fill="#f0c860" stroke="#a07a20" stroke-width=".7"/><path d="M5 13 L8 10 L11 13 L8 16Z" fill="#f0c860" stroke="#a07a20" stroke-width=".7"/><path d="M3 5 V14 H5" stroke="#8a9ab0" fill="none"/><path d="M12.5 9 H15 M12.5 13 H15" stroke="#1a4a98" stroke-width="1.4"/></svg>
<svg class="ico" style="left:52px;top:151px" width="16" height="16" viewBox="0 0 16 16"><ellipse cx="8" cy="3" rx="5.5" ry="2" fill="#d8e0f0" stroke="#555" stroke-width=".7"/><path d="M2.5 3 V9 Q8 12 13.5 9 V3" fill="#b8c8dc" stroke="#555" stroke-width=".7"/><path d="M2 10 H14 L8 15Z" fill="#f0c050" stroke="#a07a20" stroke-width=".7"/></svg>
<svg class="ico" style="left:73px;top:151px" width="16" height="16" viewBox="0 0 16 16"><path d="M8 7 L15.5 11 L8 15 L0.5 11Z" fill="#d4d4d4" stroke="#888" stroke-width=".7"/><path d="M8 2 L15.5 6 L8 10.5 L0.5 6Z" fill="#f0c860" stroke="#a07a20" stroke-width=".7"/></svg>
<svg class="ico" style="left:95px;top:151px" width="16" height="16" viewBox="0 0 16 16"><path d="M1 10 H15 L8 15.5Z" fill="#f0c050" stroke="#a07a20" stroke-width=".7"/><rect x="3.5" y="0.5" width="9" height="10" fill="#fff" stroke="#222"/><path d="M4 1 H9 L7 10 H4Z" fill="#2ac0e8"/><path d="M9 1 L8 5 L12 8" stroke="#333" fill="none"/></svg>
<svg class="ico" style="left:124px;top:151px" width="16" height="16" viewBox="0 0 16 16"><rect x="0.5" y="0.5" width="13" height="15" fill="#fff" stroke="#3a4a6a"/><circle cx="4" cy="4.5" r="1.3" fill="none" stroke="#333"/><circle cx="4" cy="11" r="1.3" fill="none" stroke="#333"/><path d="M7 4.5 H12 M7 7.5 H12 M7 11 H12" stroke="#3a5a8a"/></svg>
<svg class="ico" style="left:2px;top:133px" width="16" height="16" viewBox="0 0 16 16"><rect x="0.5" y="0.5" width="15" height="14" fill="#fff" stroke="#222"/><rect x="1" y="1" width="14" height="2" fill="#2a5ab0"/><path d="M2 6 L11 4.5 L15 6.5 L15 12.5 L6 15 L2 13Z" fill="#c8382a"/><path d="M2 6 L11 4.5 L15 6.5 L6 8.5Z" fill="#e05848"/><path d="M6 8.5 V15" stroke="#8a1a10" stroke-width=".7"/><path d="M6 5.5 L9 5 L9.5 6.5" stroke="#333" fill="none" stroke-width=".9"/></svg>
<div class="a" style="left:22px;top:172px;width:205px;height:545px;background:#fff;border:1px solid #828790"></div>
<div class="a" style="left:31px;top:180px;width:9px;height:9px;border:1px solid #919191;background:linear-gradient(#fff,#e0e0e0)"><div class="a" style="left:1px;top:3px;width:5px;height:1px;background:#3d52a0"></div></div>
<svg class="a" style="left:46px;top:177px" width="17" height="14" viewBox="0 0 17 14"><path d="M4 9 L16 9 L13 13.5 L1 13.5Z" fill="#f0c860" stroke="#b08030" stroke-width=".8"/><path d="M4 5 L16 5 L13 9.5 L1 9.5Z" fill="#f4d47a" stroke="#b08030" stroke-width=".8"/><path d="M4 1 L16 1 L13 5.5 L1 5.5Z" fill="#f8e090" stroke="#b08030" stroke-width=".8"/></svg>
<div class="t" style="left:67px;top:176px;font-weight:bold;letter-spacing:-0.3px;color:#000">Layers</div>
<div class="a" style="left:50px;top:198px;width:9px;height:9px;border:1px solid #919191;background:linear-gradient(#fff,#e0e0e0)"><div class="a" style="left:1px;top:3px;width:5px;height:1px;background:#3d52a0"></div></div>
<svg class="a" style="left:67px;top:195px" width="11" height="11" viewBox="0 0 11 11"><rect x="0.5" y="0.5" width="10" height="10" fill="#fff" stroke="#000"/><path d="M2.2 5.2 L4.4 7.6 L8.6 2.6" fill="none" stroke="#000" stroke-width="1.6"/></svg>
<div class="t" style="left:86px;top:194px;">Point</div>
<div class="a" style="left:50px;top:234px;width:9px;height:9px;border:1px solid #919191;background:linear-gradient(#fff,#e0e0e0)"><div class="a" style="left:1px;top:3px;width:5px;height:1px;background:#3d52a0"></div></div>
<svg class="a" style="left:67px;top:231px" width="11" height="11" viewBox="0 0 11 11"><rect x="0.5" y="0.5" width="10" height="10" fill="#fff" stroke="#000"/><path d="M2.2 5.2 L4.4 7.6 L8.6 2.6" fill="none" stroke="#000" stroke-width="1.6"/></svg>
<div class="a" style="left:84px;top:228px;width:46px;height:18px;background:#3399ff"></div>
<div class="t" style="left:86px;top:230px;color:#fff">Polyline</div>
<div class="a" style="left:50px;top:270px;width:9px;height:9px;border:1px solid #919191;background:linear-gradient(#fff,#e0e0e0)"><div class="a" style="left:1px;top:3px;width:5px;height:1px;background:#3d52a0"></div></div>
<svg class="a" style="left:67px;top:267px" width="11" height="11" viewBox="0 0 11 11"><rect x="0.5" y="0.5" width="10" height="10" fill="#fff" stroke="#000"/><path d="M2.2 5.2 L4.4 7.6 L8.6 2.6" fill="none" stroke="#000" stroke-width="1.6"/></svg>
<div class="t" style="left:86px;top:266px;">Polygon</div>
<div class="a" style="left:50px;top:306px;width:9px;height:9px;border:1px solid #919191;background:linear-gradient(#fff,#e0e0e0)"><div class="a" style="left:1px;top:3px;width:5px;height:1px;background:#3d52a0"></div></div>
<svg class="a" style="left:67px;top:303px" width="11" height="11" viewBox="0 0 11 11"><rect x="0.5" y="0.5" width="10" height="10" fill="#fff" stroke="#000"/><path d="M2.2 5.2 L4.4 7.6 L8.6 2.6" fill="none" stroke="#000" stroke-width="1.6"/></svg>
<div class="t" style="left:86px;top:302px;letter-spacing:-0.9px">PROVINCE</div>
<svg class="a" style="left:84px;top:215px" width="7" height="7"><path d="M3.5 0.5 L6.5 3.5 L3.5 6.5 L0.5 3.5Z" fill="#a35a00" stroke="#000" stroke-width="1.1"/></svg>
<div class="a" style="left:82px;top:255px;width:14px;height:1px;background:#a87a18"></div>
<div class="a" style="left:82px;top:286px;width:15px;height:11px;background:#c9f0f2;border:1px solid #7a7a7a"></div>
<div class="a" style="left:82px;top:322px;width:15px;height:11px;background:#c9f0f2;border:1px solid #7a7a7a"></div>
<div class="a" style="left:232px;top:126px;width:836px;height:592px;background:#f7f7f7"></div>
<div class="a" style="left:232px;top:127px;width:813px;height:573px;background:#fff;border-left:2px solid #6e6e6e;border-top:2px solid #6e6e6e"></div>
<div class="a" style="left:1047px;top:127px;width:16px;height:573px;background:#efefef;border-top:2px solid #6a6a6a"></div>
<div class="a" style="left:1047px;top:367px;width:14px;height:15px;background:linear-gradient(90deg,#fbfbfb,#f2f2f2 40%,#dcdce0 60%,#d4d4d8);border:1px solid #8a8a8a;border-left:none;border-radius:0 2px 2px 0"></div>
<div class="a" style="left:1051px;top:134px;width:0;height:0;border-left:4px solid transparent;border-right:4px solid transparent;border-bottom:4px solid #333"></div>
<div class="a" style="left:1051px;top:688px;width:0;height:0;border-left:3.5px solid transparent;border-right:3.5px solid transparent;border-top:4px solid #444"></div>
<div class="a" style="left:232px;top:699px;width:812px;height:17px;background:#ececec;border-top:1px solid #e0e0e0"></div>
<div class="a" style="left:1044px;top:699px;width:19px;height:17px;background:#efefef;border-left:1px solid #f8f8f8"></div>
<div class="a" style="left:232px;top:700px;width:2px;height:17px;background:#6a6a6a"></div>
<div class="a" style="left:235px;top:701px;width:16px;height:14px;background:linear-gradient(#f2f2f2,#dedede);border:1px solid #707070;border-radius:3px"></div>
<svg class="a" style="left:238px;top:702px" width="10" height="10"><rect x="0.5" y="0.5" width="9" height="9" fill="#b8d860" stroke="#222"/><path d="M1 9 L4 5 L6 6 L9 1 L9 9Z" fill="#8ac8e8"/><path d="M2 9 L5 5 L9 2" stroke="#e8f0c0" fill="none"/></svg>
<svg class="a" style="left:255px;top:702px" width="9" height="10"><path d="M0.5 0.5 H6 L8.5 3 V9.5 H0.5Z" fill="#fff" stroke="#222"/><rect x="2" y="2" width="3" height="2.5" fill="#5aa8e0"/><path d="M2 6.5 H4 M4.5 6.5 H7" stroke="#222"/><path d="M4.5 6.5 H7" stroke="#3a8ad8"/></svg>
<div class="a" style="left:270px;top:701px;width:1px;height:13px;background:#808080"></div>
<svg class="a" style="left:279px;top:702px" width="10" height="10"><path d="M1.5 4.5 A3.8 3.8 0 0 1 8 2.5 M8.5 5.5 A3.8 3.8 0 0 1 2 7.5" stroke="#1a4aa8" stroke-width="1.6" fill="none"/><path d="M6 1 L9.5 1 L9 4.5Z M4 9 L0.5 9 L1 5.5Z" fill="#1a4aa8"/></svg>
<div class="a" style="left:298px;top:704px;width:2px;height:7px;background:#1a4aa8"></div><div class="a" style="left:302px;top:704px;width:2px;height:7px;background:#1a4aa8"></div>
<div class="a" style="left:310px;top:700px;width:17px;height:16px;background:#e4e4e4"></div>
<div class="a" style="left:316px;top:704px;width:0;height:0;border-top:3.5px solid transparent;border-bottom:3.5px solid transparent;border-right:4px solid #333"></div>
<div class="a" style="left:668px;top:700px;width:18px;height:15px;background:linear-gradient(#fbfbfb,#f4f4f4 45%,#dcdce0 60%,#d8d8dc);border:1px solid #8a8a8a;border-top:none;border-radius:0 0 2px 2px"></div>
<div class="a" style="left:673px;top:704px;width:8px;height:7px;background:repeating-linear-gradient(90deg,#222 0 2px,transparent 2px 3px);opacity:.85"></div>
<div class="a" style="left:1035px;top:703px;width:0;height:0;border-top:4px solid transparent;border-bottom:4px solid transparent;border-left:4px solid #333"></div>
<svg class="a" style="left:0;top:0" width="1360" height="768" viewBox="0 0 1360 768">
<polygon points="549.4,174.2 554.8,172.4 556.7,176.0 560.4,176.0 564.0,176.8 566.7,181.0 570.3,178.2 574.0,182.8 575.8,188.3 578.7,191.5 580.4,195.5 584.0,199.2 586.0,203.0 588.6,206.5 590.4,209.2 587.6,212.0 585.0,212.9 588.6,214.0 591.3,216.5 594.5,217.9 597.7,219.2 599.5,222.9 598.6,228.4 601.5,230.9 604.0,233.8 606.9,236.4 608.3,239.9 610.4,243.0 613.0,245.0 614.2,247.9 616.6,250.0 617.7,253.0 622.3,254.8 625.3,256.6 627.3,259.5 629.6,262.0 629.9,265.9 631.4,269.4 636.0,272.0 638.7,274.3 640.3,277.6 643.7,277.0 647.1,277.6 648.0,281.3 648.5,285.2 650.5,288.6 652.5,291.2 654.9,293.6 656.1,296.9 658.9,298.8 660.6,301.5 660.6,304.7 659.3,308.0 659.9,311.6 658.9,314.9 660.9,317.6 661.5,320.8 660.6,324.2 664.5,326.1 667.4,329.3 670.4,329.3 673.3,330.8 676.4,329.9 679.3,331.0 682.7,330.0 686.1,329.0 689.4,327.6 692.4,328.2 695.3,329.3 692.8,331.0 695.7,334.0 698.7,336.9 701.8,334.8 705.5,334.3 708.9,335.2 711.4,337.7 714.9,337.6 718.2,338.6 720.5,341.8 723.3,344.5 726.2,343.5 729.2,342.8 732.3,344.2 735.1,346.2 736.1,349.1 737.5,351.8 738.5,354.6 739.3,358.4 739.3,362.3 738.7,367.7 736.1,369.5 734.0,371.9 732.5,374.7 729.9,376.6 731.0,382.1 733.4,384.4 735.9,386.6 737.9,389.3 740.9,391.0 742.8,394.2 745.7,396.6 747.6,399.8 750.7,401.3 754.2,400.9 757.3,399.1 760.8,398.5 764.2,397.6 767.5,399.8 768.1,403.1 770.4,405.8 770.8,409.2 772.8,412.0 772.7,415.6 774.1,418.6 777.5,418.6 780.8,417.6 784.2,417.7 787.4,416.4 790.2,414.6 793.4,413.8 796.2,412.0 795.6,409.0 794.9,406.0 794.0,403.1 794.3,399.6 795.4,396.2 795.1,392.7 797.5,394.9 800.7,395.4 804.4,395.7 808.0,396.5 811.7,396.5 813.8,394.1 817.1,393.4 819.5,391.4 822.1,393.5 824.5,395.9 827.4,397.4 830.5,398.7 833.5,400.2 836.2,402.2 838.6,404.5 841.6,406.0 845.2,405.2 848.8,406.2 852.4,405.7 856.0,406.5 857.1,410.9 855.4,413.6 852.7,415.3 856.0,416.8 858.2,419.7 859.1,423.2 861.6,426.1 862.8,429.5 863.7,433.0 865.9,438.5 862.7,440.4 859.3,441.9 858.2,447.4 862.6,450.7 862.0,454.0 863.7,457.3 863.1,460.6 863.0,464.0 862.4,467.3 863.3,470.6 862.7,473.8 862.7,476.9 863.9,480.1 863.7,483.2 863.9,486.4 862.9,489.6 863.7,492.7 862.4,496.3 863.7,500.2 862.6,503.8 863.6,507.0 863.8,510.2 864.1,513.5 863.9,516.8 864.2,520.0 863.8,524.1 863.8,528.3 864.1,532.0 864.5,535.6 863.3,539.2 860.8,541.3 858.2,543.3 855.4,545.0 852.2,545.6 848.9,545.5 846.0,547.1 844.3,550.1 843.2,553.4 841.9,556.5 841.2,559.6 840.6,562.6 840.4,565.8 842.5,568.6 842.9,572.1 846.0,572.9 849.1,572.7 852.3,572.8 855.4,572.1 857.0,574.9 859.8,576.8 861.7,579.4 865.4,580.3 869.0,581.5 871.2,583.7 872.1,586.7 869.3,588.5 866.9,590.8 867.9,596.0 871.2,598.6 873.1,602.3 875.6,604.4 877.0,607.1 878.3,610.0 876.2,612.9 873.1,614.8 872.1,618.0 871.3,621.4 870.1,624.6 867.9,627.3 866.2,630.8 863.3,633.5 863.7,636.7 862.8,639.8 863.0,643.0 861.7,646.0 859.2,644.0 856.2,643.1 853.3,641.9 849.9,642.4 846.6,642.0 843.3,641.5 840.0,641.3 836.7,640.8 833.6,640.6 831.2,638.3 828.4,637.1 825.2,637.1 822.8,639.1 820.4,641.0 818.0,642.9 815.8,645.4 813.2,647.2 810.3,648.6 807.5,650.2 805.3,652.4 802.1,653.3 800.4,656.1 798.1,658.2 795.0,659.2 792.1,657.6 788.8,657.8 785.5,657.9 782.5,656.5 780.6,653.2 777.8,650.4 776.7,646.7 774.9,649.8 773.1,652.9 769.0,653.2 765.3,654.6 761.7,656.5 758.6,657.1 756.0,658.8 753.0,659.6 750.1,660.9 747.0,661.2 743.5,661.2 740.2,662.2 736.8,662.2 733.5,663.3 730.7,661.2 728.3,658.5 725.8,660.4 722.5,660.7 720.0,662.7 716.7,661.2 712.5,662.7 709.4,665.8 706.0,665.4 702.6,665.8 699.3,666.7 697.5,661.2 695.2,658.6 692.3,656.6 689.3,654.8 688.5,651.2 688.7,647.5 688.4,643.9 685.9,641.3 683.8,638.4 683.3,634.9 683.8,631.5 684.8,628.1 685.7,624.8 682.0,624.8 678.4,623.8 676.6,620.3 674.9,616.6 672.0,613.8 667.9,612.1 663.8,610.2 663.7,607.1 662.9,604.1 661.9,601.3 659.9,598.7 658.7,596.0 658.3,592.9 654.8,590.6 652.0,587.4 650.7,584.1 650.0,580.7 650.1,577.1 649.2,573.7 645.8,571.6 641.9,571.0 637.9,569.4 633.7,569.2 630.5,566.5 627.3,563.7 625.3,561.3 623.4,558.9 620.2,557.7 618.8,554.8 616.4,552.8 614.1,550.4 611.2,549.0 608.5,547.3 605.4,546.1 602.4,544.9 600.0,542.7 597.6,542.1 595.4,539.6 592.3,538.3 590.4,535.5 587.5,533.9 586.5,530.2 583.9,527.5 579.3,526.6 576.0,524.5 573.0,522.0 570.4,520.4 568.7,517.7 565.7,516.6 562.0,517.0 560.6,514.2 558.4,512.0 557.4,509.0 557.1,506.0 557.5,502.9 552.0,501.1 550.1,497.7 550.4,493.6 548.4,490.2 546.6,486.2 543.8,482.9 541.2,480.3 540.2,476.6 538.4,473.4 535.6,471.0 535.0,468.0 533.5,465.2 533.0,462.1 532.0,459.2 527.9,460.4 523.7,460.1 522.7,456.5 524.6,452.8 523.7,449.2 521.7,445.4 519.2,441.9 516.5,439.1 513.7,436.4 511.0,433.4 507.3,431.8 504.1,429.2 501.0,426.4 500.3,422.9 498.2,420.0 495.5,417.4 492.0,415.8 489.4,413.7 487.4,411.3 485.6,408.5 483.8,404.5 482.8,400.3 480.1,397.9 478.4,394.7 475.6,392.4 473.7,389.3 471.9,384.8 473.7,381.1 473.7,376.6 471.8,374.3 469.5,372.2 468.3,369.3 470.8,366.5 471.9,362.9 469.8,359.8 468.3,356.5 467.7,353.4 467.3,350.2 465.2,347.8 462.8,345.6 463.2,341.4 461.9,337.4 463.7,333.7 465.9,331.3 468.3,329.2 466.2,325.5 462.8,322.8 460.1,320.5 457.3,318.3 455.5,312.8 457.3,308.2 458.2,302.8 460.6,299.4 462.8,296.0 461.4,291.8 460.0,287.6 459.1,282.1 461.9,280.3 465.5,284.9 469.5,283.5 473.7,284.0 475.4,281.0 476.8,277.7 478.3,274.6 481.0,272.1 484.7,270.3 484.6,265.9 483.4,261.7 487.4,261.2 491.3,262.4 494.7,264.8 497.5,266.3 499.9,268.3 502.9,269.4 505.3,271.6 508.0,273.3 510.2,275.7 513.8,271.2 512.9,268.0 512.0,264.8 506.5,263.9 509.3,260.3 512.0,259.3 512.7,255.9 513.8,252.5 513.8,249.0 516.7,247.4 520.0,247.5 523.0,246.6 524.8,243.0 530.2,244.8 532.0,240.2 535.9,241.6 539.3,243.9 542.7,244.8 545.7,246.6 545.6,250.3 546.6,253.9 549.4,253.9 551.7,250.7 554.0,247.5 555.2,242.0 555.3,238.6 555.7,235.2 556.0,231.8 555.1,228.5 555.4,225.1 555.2,221.7 555.2,218.3 554.4,214.6 554.0,210.9 552.8,207.4 552.1,203.7 551.4,200.4 550.6,197.1 550.8,193.7 549.6,190.5 548.5,187.3 549.5,184.1 549.8,180.8 548.7,177.4" fill="#ccf2f4" stroke="#6e6e6e" stroke-width="1.1" shape-rendering="crispEdges"/>
<path d="M604 305 L607.5 308 L604 311 L600.5 308Z" fill="#a05800" stroke="#000" stroke-width="1"/>
<path d="M626.5 365 L630.0 368 L626.5 371 L623.0 368Z" fill="#a05800" stroke="#000" stroke-width="1"/>
<path d="M760 461.5 L763.5 464.5 L760 467.5 L756.5 464.5Z" fill="#a05800" stroke="#000" stroke-width="1"/>
<path d="M819 530 L822.5 533 L819 536 L815.5 533Z" fill="#a05800" stroke="#000" stroke-width="1"/>
<path d="M744.5 577.5 L748.0 580.5 L744.5 583.5 L741.0 580.5Z" fill="#a05800" stroke="#000" stroke-width="1"/>
<polyline points="604,308 626.5,368 760,464.5 819,533 744.5,580.5" fill="none" stroke="#00ffff" stroke-width="3.3" stroke-linejoin="round"/>
<path d="M520 331 L523.5 334 L520 337 L516.5 334Z" fill="#a05800" stroke="#000" stroke-width="1"/>
<path d="M549 439 L552.5 442 L549 445 L545.5 442Z" fill="#a05800" stroke="#000" stroke-width="1"/>
<path d="M658 447 L661.5 450 L658 453 L654.5 450Z" fill="#a05800" stroke="#000" stroke-width="1"/>
<path d="M690 516 L693.5 519 L690 522 L686.5 519Z" fill="#a05800" stroke="#000" stroke-width="1"/>
<path d="M708 440 L716 448 M716 440 L708 448" stroke="#4a3a9a" stroke-width="1"/>
</svg>
<div class="a" style="left:261px;top:230px;width:160px;height:44px;background:#fdfdfd;border:3px solid #8e8e8e"></div>
<div class="a" style="left:264px;top:233px;width:154px;height:15px;background:#a3a3a3"></div>
<div class="t" style="left:266px;top:234px;color:#f4f4f4">Snapping</div>
<div class="a" style="left:264px;top:248px;width:154px;height:23px;background:linear-gradient(#fbfbfb,#f1f1f1)"></div>
<div class="t" style="left:268px;top:253px">Snapping</div>
<div class="dd" style="left:322px;top:258px;border-left-width:3px;border-right-width:3px;border-top:3px solid #000"></div>
<div class="dd" style="left:392px;top:238px;border-left-width:4px;border-right-width:4px;border-top:4px solid #f0f0f0"></div>
<svg class="a" style="left:405px;top:235px" width="10" height="10"><path d="M1.2 1.2 L8.8 8.8 M8.8 1.2 L1.2 8.8" stroke="#fff" stroke-width="2.2"/></svg>
<div class="hot" style="left:330px;top:249px;width:22px;height:22px"></div>
<svg class="a" style="left:335px;top:254px" width="12" height="12"><circle cx="6" cy="6" r="5" fill="none" stroke="#2b3a55" stroke-width="1.1"/></svg>
<div class="a" style="left:356px;top:253px;width:13px;height:13px;background:#d8e8f8;border:1px solid #e4f0fc"></div>
<div class="a" style="left:378px;top:253px;width:13px;height:13px;background:#d8e8f8;border:1px solid #e4f0fc"></div>
<div class="a" style="left:400px;top:253px;width:13px;height:13px;background:#e0ecf8"></div>
<svg class="a" style="left:357px;top:254px" width="11" height="11"><rect x="1.5" y="1.5" width="8" height="8" fill="#fff" stroke="#2b3a55"/><path d="M5.5 1.5V9.5M1.5 5.5H9.5" stroke="#2b3a55"/></svg>
<svg class="a" style="left:379px;top:254px" width="11" height="11"><rect x="1.5" y="1.5" width="8" height="8" fill="#e8f2fc" stroke="#2b3a55"/><rect x="3.5" y="3.5" width="4" height="4" fill="#fff" stroke="#9ab8d8"/></svg>
<svg class="a" style="left:400px;top:252px" width="14" height="14"><rect x="3.5" y="3.5" width="7" height="7" fill="#fff" stroke="#2b3a55"/><path d="M1 13 L13 1" stroke="#2b3a55"/></svg>
<div class="a" style="left:1068px;top:126px;width:270px;height:20px;background:linear-gradient(90deg,#c2d0e0,#ccd9e8 60%,#d2deec)"></div>
<div class="t" style="left:1072px;top:130px;color:#3c4250;letter-spacing:-0.45px">Create Features</div>
<svg class="a" style="left:1309px;top:131px" width="8" height="9"><path d="M1.5 0.5 H5.5 V5 M1.5 0.5 V5" stroke="#222" fill="none"/><rect x="4.5" y="0.5" width="2" height="4.5" fill="#222"/><path d="M0 5.5 H8" stroke="#222"/><path d="M3.5 5.5 V9" stroke="#222"/></svg>
<svg class="a" style="left:1325px;top:132px" width="9" height="8"><path d="M0.8 0.8 L8.2 7.2 M8.2 0.8 L0.8 7.2" stroke="#222" stroke-width="1.5"/></svg>
<div class="a" style="left:1068px;top:146px;width:270px;height:26px;background:linear-gradient(#fbfbfb,#f3f3f3 60%,#ececec)"></div>
<div class="a" style="left:1128px;top:149px;width:78px;height:19px;background:#fff"></div>
<div class="a" style="left:1193px;top:150px;width:12px;height:17px;background:#f0f0f0"></div>
<div class="t" style="left:1132px;top:152px;color:#6d6d6d;letter-spacing:-0.4px">&lt;Search&gt;</div>
<div class="dd" style="left:1196px;top:157px;border-left-width:3px;border-right-width:3px;border-top:3px solid #000"></div>
<div class="dd" style="left:1095px;top:157px;border-left-width:3px;border-right-width:3px;border-top:3px solid #000"></div>
<svg class="ico" style="left:1075px;top:151px" width="16" height="16" viewBox="0 0 16 16"><ellipse cx="6" cy="2.5" rx="5.5" ry="2" fill="#a8b8c8" stroke="#6a7a8a" stroke-width=".6"/><path d="M0.5 2.5 L5 8 V15 L7 15 V8 L11.5 2.5" fill="#c8d4e0" stroke="#6a7a8a" stroke-width=".6"/><rect x="7" y="6" width="2.5" height="2.5" fill="#3a7ac8"/><rect x="7" y="9.5" width="2.5" height="2.5" fill="#4a9a2a"/><rect x="7" y="13" width="2.5" height="2.5" fill="#d88a20"/><path d="M11 7 H14 M11 11 H14 M11 14 H14" stroke="#3a7ac8"/></svg>
<svg class="ico" style="left:1108px;top:151px" width="16" height="16" viewBox="0 0 16 16"><rect x="0.5" y="0.5" width="10" height="9" fill="#fff" stroke="#333"/><rect x="1" y="1" width="9" height="2" fill="#2a5ab0"/><rect x="5.5" y="5.5" width="10" height="10" fill="#fff" stroke="#333"/><rect x="7" y="7.5" width="2" height="2" fill="#3a7ac8"/><rect x="7" y="10.5" width="2" height="2" fill="#4a9a2a"/><rect x="7" y="13" width="2" height="1.8" fill="#d88a20"/><path d="M10 8.5 H14 M10 11.5 H14" stroke="#333"/></svg>
<svg class="ico" style="left:1210px;top:151px" width="16" height="16" viewBox="0 0 16 16"><circle cx="8" cy="8" r="7.5" fill="#c8e0f8" stroke="#3a7ac8"/><circle cx="8" cy="8" r="6" fill="#e8f4fc"/><circle cx="7" cy="7" r="3" fill="none" stroke="#1a5ab0" stroke-width="1.6"/><path d="M9 9 L12 12" stroke="#1a5ab0" stroke-width="2"/></svg>
<svg class="ico" style="left:1232px;top:151px" width="16" height="16" viewBox="0 0 16 16"><circle cx="8" cy="8" r="7.5" fill="#f0f0f0" stroke="#d0d0d0"/><circle cx="9" cy="7" r="3" fill="none" stroke="#c8c8c8" stroke-width="1.6"/><path d="M3 9 L7 13 M7 9 L3 13" stroke="#c8c8c8" stroke-width="1.6"/></svg>
<div class="a" style="left:1068px;top:172px;width:270px;height:431px;background:#fff;border:1px solid #828790"></div>
<div class="t" style="left:1082px;top:178px;color:#2424a8">Point</div>
<div class="a" style="left:1114px;top:184px;width:212px;height:1px;background:#a4b8dc"></div>
<div class="t" style="left:1082px;top:218px;color:#2424a8">Polygon</div>
<div class="a" style="left:1130px;top:224px;width:196px;height:1px;background:#a4b8dc"></div>
<div class="t" style="left:1082px;top:259px;color:#2424a8">Polyline</div>
<div class="a" style="left:1128px;top:265px;width:198px;height:1px;background:#a4b8dc"></div>
<svg class="a" style="left:1078px;top:199px" width="8" height="8"><path d="M4 0.5 L7.5 4 L4 7.5 L0.5 4Z" fill="#a35a00" stroke="#000"/></svg>
<div class="t" style="left:1091px;top:196px;font-size:11px;letter-spacing:-0.05px">Point</div>
<div class="a" style="left:1075px;top:237px;width:15px;height:15px;background:#c9f0f2;border:1px solid #6a6a6a"></div>
<div class="t" style="left:1091px;top:237px;font-size:11px;letter-spacing:-0.2px">Polygon</div>
<div class="a" style="left:1071px;top:278px;width:59px;height:15px;background:linear-gradient(#fafafa,#ececec);border:1px solid #d0d0d0;border-radius:2px"></div>
<div class="a" style="left:1075px;top:285px;width:14px;height:1px;background:#c8a050"></div>
<div class="t" style="left:1091px;top:278px;font-size:11px;letter-spacing:-0.25px">Polyline</div>
<div class="a" style="left:1158px;top:609px;width:90px;height:2px;border-top:1px solid #a0a0a0;border-bottom:1px solid #fff"></div>
<div class="a" style="left:1314px;top:605px;width:11px;height:11px;border:1px solid #000;background:#fff"></div>
<div class="a" style="left:1326px;top:605px;width:11px;height:11px;border:1px solid #000;background:#fff"><div class="a" style="left:4px;top:1px;width:1px;height:7px;background:#000"></div></div>
<svg class="a" style="left:1315px;top:606px" width="9" height="9"><path d="M2 1.5 L4.5 4 L7 1.5 M2 4.5 L4.5 7 L7 4.5" stroke="#000" stroke-width="1.2" fill="none"/></svg>
<div class="a" style="left:1068px;top:618px;width:269px;height:100px;background:#fff;border-left:1px solid #828790;border-top:1px solid #a0a0a0"></div>
<div class="a" style="left:1069px;top:619px;width:268px;height:25px;background:#efefef"></div>
<svg class="ico" style="left:1069px;top:623px" width="16" height="16" viewBox="0 0 16 16"><rect x="0.5" y="1.5" width="12" height="14" fill="#eaf2fb" stroke="#3a5a80"/><rect x="2" y="4" width="2.5" height="2.5" fill="#3a7ac8"/><rect x="2" y="8" width="2.5" height="2.5" fill="#4a9a2a"/><rect x="2" y="12" width="2.5" height="2.5" fill="#d88a20"/><path d="M6 5 H10 M6 9 H9 M6 13 H9" stroke="#3a7ac8"/><path d="M8 12 L15 3 L16 4.5 L9.5 13Z" fill="#f0c040" stroke="#8a5a10" stroke-width=".6"/><path d="M14.5 2 L16 4" stroke="#e05050" stroke-width="1.5"/></svg>
<div class="t" style="left:1086px;top:626px;font-weight:bold;letter-spacing:-0.4px">Construction Tools</div>
<div class="a" style="left:1080px;top:652px;width:246px;height:20px;background:#ededed;border:1px solid #a8a8a8"></div>
<svg class="a" style="left:1084px;top:655px" width="15" height="15"><path d="M1 14 L13 1.5" stroke="#555" stroke-width="1"/></svg>
<div class="t" style="left:1106px;top:656px;">Line</div>
<div class="a" style="left:1083px;top:675px;width:14px;height:13px;background:#d8ecb0;border:1px solid #777"></div>
<div class="t" style="left:1106px;top:675px;">Rectangle</div>
<svg class="a" style="left:1081px;top:693px" width="17" height="17"><circle cx="8.5" cy="8.5" r="7.5" fill="#d8ecb0" stroke="#666"/></svg>
<div class="t" style="left:1106px;top:695px;">Circle</div>
<svg class="a" style="left:1081px;top:713px" width="17" height="5"><circle cx="8.5" cy="9" r="7.5" fill="#d8ecb0" stroke="#666"/></svg>
<div class="a" style="left:1317px;top:699px;width:16px;height:16px;background:#f0f0f0;border:1px solid #b0b0b0;border-left-color:#fff;border-top-color:#fff"></div>
<div class="dd" style="left:1321px;top:705px;border-left-width:4px;border-right-width:4px;border-top:4px solid #000"></div>
<div class="a" style="left:1340px;top:128px;width:20px;height:72px;background:#f0f0f0;border:1px solid #9a9a9a;border-right:none;border-radius:4px 0 0 4px"></div>
<div class="t" style="left:1320px;top:166px;width:60px;text-align:center;transform:rotate(90deg);color:#4a4a5e;font-size:12px;-webkit-text-stroke:0">Catalog</div>
<svg class="ico" style="left:1342px;top:133px" width="16" height="16" viewBox="0 0 16 16"><rect x="0.5" y="0.5" width="15" height="14" fill="#fff" stroke="#222"/><rect x="1" y="1" width="14" height="2" fill="#2a5ab0"/><path d="M6 4 L14 4 L14 14 L6 14Z" fill="#e8d020" stroke="#7a6a10" stroke-width=".7"/><path d="M2 11 L9 9 L10 13 L3 15Z" fill="#d8c010" stroke="#7a6a10" stroke-width=".7"/><ellipse cx="4.5" cy="11.5" rx="2" ry="1.2" fill="#3a9a3a"/></svg>
<div class="a" style="left:0;top:717px;width:1360px;height:21px;background:#f0f0f0"></div>
<div class="t" style="left:3px;top:722px;color:#0a0a14;letter-spacing:-0.1px">Number of features selected: 1</div>
<div class="a" style="left:1081px;top:720px;width:1px;height:17px;background:#dcdcdc"></div>
<div class="a" style="left:955px;top:720px;width:1px;height:17px;background:#e4e4e4"></div>
<div class="a" style="left:1102px;top:720px;width:1px;height:17px;background:#dcdcdc"></div>
<div class="t" style="left:1106px;top:722px;font-size:11px;color:#0a0a14">658703.986&nbsp; 1593374.249 Meters</div>
<div class="a" style="left:0;top:738px;width:1360px;height:30px;background:linear-gradient(90deg,#0b0f07,#10160c 30%,#0b0f08 60%,#111a0d 100%);border-top:1px solid #5e6a56"></div>
<div class="a" style="left:0;top:739px;width:1360px;height:1px;background:#2a3324"></div>
<svg class="a" style="left:7px;top:733px" width="40" height="36" viewBox="0 0 40 36">
<defs><radialGradient id="orb" cx="50%" cy="40%" r="60%"><stop offset="0" stop-color="#6ac8f0"/><stop offset=".6" stop-color="#1a6ab0"/><stop offset="1" stop-color="#0a2a50"/></radialGradient></defs>
<circle cx="20" cy="19" r="18" fill="url(#orb)" stroke="#2a4a6a"/>
<path d="M10 12 Q14 10 19 12 L18 18 Q13 16 9 18Z" fill="#f05a28"/>
<path d="M21 12 Q26 14 31 12 L30 18 Q25 20 20 18Z" fill="#7cc242"/>
<path d="M9 20 Q13 18 18 20 L17 26 Q12 24 8 26Z" fill="#1ea0e0"/>
<path d="M20 20 Q25 22 30 20 L29 26 Q24 28 19 26Z" fill="#fcc20e"/>
<ellipse cx="20" cy="9" rx="12" ry="6" fill="#fff" opacity=".25"/>
</svg>
<svg class="a" style="left:67px;top:745px" width="19" height="19"><circle cx="9.5" cy="9.5" r="9" fill="#1a1a1a" stroke="#333"/><path d="M4 9 Q9.5 2 15 9 Q15 15 9.5 15 Q4 15 4 9Z M4.5 9 Q9.5 7 14.5 9" fill="none" stroke="#eee" stroke-width="1.3"/></svg>
<div class="a" style="left:101px;top:744px;width:19px;height:19px;border-radius:4px;background:linear-gradient(90deg,#e23c3c 0 20%,#f5a623 20% 40%,#f8e71c 40% 60%,#4caf50 60% 80%,#2196f3 80%)"></div>
<div class="a" style="left:103px;top:747px;width:15px;height:15px;border-radius:50%;background:radial-gradient(circle,#223 0 2px,#556 3px,#dde 4px 5px,#334 6px)"></div>
<div class="a" style="left:113px;top:740px;width:13px;height:12px;border-radius:50%;background:#fff;border:1px solid #999"></div>
<div class="t" style="left:116px;top:739px;font-size:10px;font-weight:bold;color:#000">7</div>
<div class="a" style="left:132px;top:744px;width:19px;height:19px;border-radius:3px;background:linear-gradient(#4a6ab0,#33508f)"></div>
<div class="t" style="left:138px;top:747px;font-size:18px;font-weight:bold;color:#fff;line-height:18px;height:18px">f</div>
<div class="a" style="left:163px;top:744px;width:19px;height:19px;border-radius:3px;background:linear-gradient(#3aa0ee,#1a78d8)"></div>
<svg class="a" style="left:163px;top:744px" width="19" height="19"><path d="M6.5 4 L9.5 6 L6.5 8 L3.5 6Z M12.5 4 L15.5 6 L12.5 8 L9.5 6Z M6.5 8 L9.5 10 L6.5 12 L3.5 10Z M12.5 8 L15.5 10 L12.5 12 L9.5 10Z M6.5 13 L9.5 11 L12.5 13 L9.5 15Z" fill="#fff"/></svg>
<div class="a" style="left:203px;top:739px;width:42px;height:28px;border:1px solid #6a7068;border-radius:3px;background:linear-gradient(155deg,#8a8f88,#5e635c 35%,#2a2e28 50%,#1c201a)"></div>
<div class="a" style="left:249px;top:739px;width:42px;height:28px;border:1px solid #6a7068;border-radius:3px;background:linear-gradient(155deg,#8a8f88,#5e635c 35%,#2a2e28 50%,#1c201a)"></div>
<div class="a" style="left:295px;top:739px;width:42px;height:28px;border:1px solid #6a7068;border-radius:3px;background:linear-gradient(155deg,#8a8f88,#5e635c 35%,#2a2e28 50%,#1c201a)"></div>
<div class="a" style="left:341px;top:739px;width:42px;height:28px;border:1px solid #6a7068;border-radius:3px;background:linear-gradient(155deg,#8a8f88,#5e635c 35%,#2a2e28 50%,#1c201a)"></div>
<div class="a" style="left:387px;top:739px;width:38px;height:28px;border:1px solid #6a7068;border-radius:3px;background:linear-gradient(155deg,#8a8f88,#5e635c 35%,#2a2e28 50%,#1c201a)"></div>
<div class="a" style="left:433px;top:739px;width:42px;height:28px;border:1px solid #6a7068;border-radius:3px;background:linear-gradient(155deg,#c4c8c0,#9aa096 35%,#5a6056 50%,#4a5046)"></div>
<div class="a" style="left:425px;top:740px;width:4px;height:27px;border:1px solid #4a5048;border-left:none;border-radius:0 3px 3px 0"></div>
<svg class="a" style="left:215px;top:744px" width="20" height="19"><ellipse cx="10" cy="10" rx="8" ry="7" fill="#d0e8f8"/><path d="M3 12 Q10 4 18 8" stroke="#e03070" stroke-width="2" fill="none"/><path d="M5 5 Q12 2 16 7 Q10 6 6 12Z" fill="#3a8ae0"/></svg>
<div class="a" style="left:262px;top:744px;width:17px;height:19px;background:linear-gradient(#2a8ae8,#1560c0);border:1px solid #0a3a80"></div>
<svg class="a" style="left:262px;top:744px" width="17" height="19"><path d="M3 16 Q4 6 12 4 L15 4 L15 16Z" fill="#fff"/><circle cx="9" cy="9" r="1.5" fill="#1560c0"/><circle cx="12" cy="7" r="1.5" fill="#1560c0"/><circle cx="12" cy="11" r="1.5" fill="#1560c0"/></svg>
<svg class="a" style="left:306px;top:744px" width="20" height="20" viewBox="0 0 20 20"><circle cx="10" cy="10" r="9" fill="#db4437"/><path d="M10 10 L18.5 7 A9 9 0 0 1 6 18Z" fill="#f4c20d"/><path d="M10 10 L6 18 A9 9 0 0 1 2 5.5Z" fill="#0f9d58"/><circle cx="10" cy="10" r="4.2" fill="#fff"/><circle cx="10" cy="10" r="3.2" fill="#4285f4"/></svg>
<svg class="a" style="left:352px;top:745px" width="19" height="18"><path d="M1 3 L7 3 L8 5 L18 5 L18 17 L1 17Z" fill="#e8c060"/><path d="M1 7 L18 7 L18 17 L1 17Z" fill="#f8dc88"/><path d="M5 17 L5 12 L14 12 L14 17" fill="#3aa0e0"/><path d="M7 14 L12 14" stroke="#fff"/></svg>
<div class="a" style="left:397px;top:744px;width:18px;height:18px;background:#fff;border:1px solid #2a5ab0"></div>
<div class="t" style="left:398px;top:746px;font-size:14px;font-weight:bold;color:#1a4aa8;line-height:14px">W</div>
<svg class="a" style="left:443px;top:743px" width="21" height="21" viewBox="0 0 17 17"><circle cx="8" cy="8" r="7.5" fill="#1d5aa0"/><circle cx="8" cy="8" r="6" fill="#2e8a3c"/><circle cx="7" cy="7" r="4.2" fill="#bfe6f5" stroke="#e0e0e0" stroke-width="1.3"/><line x1="10" y1="10" x2="15" y2="15" stroke="#c86a28" stroke-width="2.2"/></svg>
<div class="t" style="left:1094px;top:744px;font-size:12px;color:#e8e8e8">EN</div>
<div class="a" style="left:1125px;top:751px;width:0;height:0;border-left:4px solid transparent;border-right:4px solid transparent;border-bottom:5px solid #eee"></div>
<svg class="a" style="left:1146px;top:745px" width="16" height="16"><path d="M2 1 V15" stroke="#eee" stroke-width="1.5"/><path d="M3 2 L9 2 L10 4 L15 4 L13 7 L15 10 L9 10 L8 8 L3 8Z" fill="#eee"/></svg>
<svg class="a" style="left:1170px;top:745px" width="16" height="16"><rect x="1" y="3" width="8" height="12" fill="none" stroke="#eee" stroke-width="1.5"/><path d="M5 6 L12 6 L12 11 L9 13 L7 13" fill="#ddd" stroke="#eee"/><path d="M8 2 V6 M11 2 V6" stroke="#eee" stroke-width="1.4"/></svg>
<svg class="a" style="left:1194px;top:745px" width="16" height="16"><rect x="4" y="5" width="11" height="8" fill="none" stroke="#eee" stroke-width="1.4"/><path d="M2 1 V8 M7 14 H12" stroke="#eee" stroke-width="1.4"/></svg>
<svg class="a" style="left:1218px;top:743px" width="17" height="18"><path d="M4.5 1 L8.5 3.5 L4.5 6 L0.5 3.5Z M12.5 1 L16.5 3.5 L12.5 6 L8.5 3.5Z M4.5 6 L8.5 8.5 L4.5 11 L0.5 8.5Z M12.5 6 L16.5 8.5 L12.5 11 L8.5 8.5Z M4.5 12 L8.5 9.5 L12.5 12 L8.5 14.5Z" fill="#4aa8f0" stroke="#d8ecfc" stroke-width=".5"/><circle cx="12.5" cy="13.5" r="3.8" fill="#2a9a2a" stroke="#fff" stroke-width=".8"/><path d="M10.8 13.5 L12.2 15 L14.5 12" stroke="#fff" stroke-width="1.1" fill="none"/></svg>
<svg class="a" style="left:1244px;top:745px" width="14" height="16"><path d="M1 5 H4 L9 1 V15 L4 11 H1Z" fill="#eee"/><path d="M11 5 Q13 8 11 11" stroke="#ccc" fill="none"/></svg>
<div class="t" style="left:1291px;top:747px;font-size:12px;color:#f0f0f0">14:08</div>
<div class="a" style="left:1346px;top:740px;width:14px;height:28px;border:1px solid #5a6256;border-right:none;border-radius:2px 0 0 2px;background:linear-gradient(90deg,#2a2f28,#40463c)"></div>
</body></html>
